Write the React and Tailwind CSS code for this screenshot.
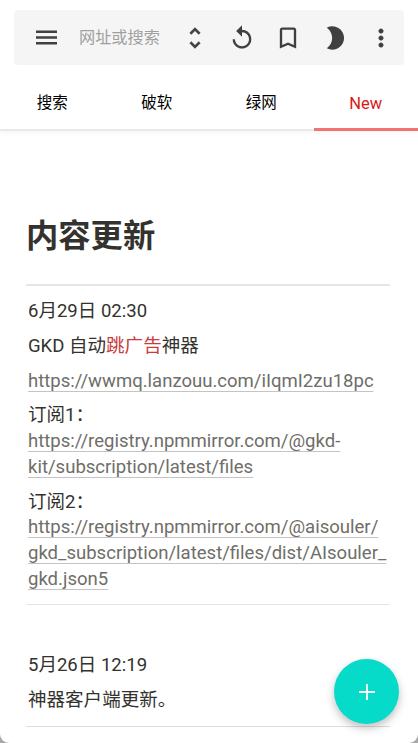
const tabs = ['搜索', '破软', '绿网', 'New']

const Link = ({ children }) => (
  <a className="text-[#6f6e69] underline decoration-[#c4c4c4] decoration-1 underline-offset-[4px] [text-decoration-skip-ink:none]">
    {children}
  </a>
)

const Toolbar = () => (
  <div className="mx-3.5 mt-2.5 flex h-[55px] items-center rounded bg-[#f5f5f5] text-[#404040]">
    <svg className="ml-[22px] h-[15px] w-[21px] shrink-0" viewBox="0 0 21 15" fill="currentColor">
      <path d="M0 .5h21v2.5H0zM0 6.3h21v2.5H0zM0 12.1h21v2.5H0z" />
    </svg>
    <span className="ml-[22px] w-[82px] shrink-0 whitespace-nowrap pt-px text-[16.2px] text-[#a0a0a0]">
      网址或搜索
    </span>
    <svg className="ml-5 h-7 w-7 shrink-0" viewBox="0 0 24 24" fill="currentColor" stroke="currentColor" strokeWidth=".3">
      <path d="M12 5.83 15.17 9l1.41-1.41L12 3 7.41 7.59 8.83 9 12 5.83zm0 12.34L8.83 15l-1.41 1.41L12 21l4.59-4.59L15.17 15 12 18.17z" />
    </svg>
    <svg className="ml-[19px] h-7 w-7 shrink-0" viewBox="0 0 24 24" fill="currentColor">
      <path d="M12 5V1L7 6l5 5V7c3.31 0 6 2.69 6 6s-2.69 6-6 6-6-2.69-6-6H4c0 4.42 3.58 8 8 8s8-3.58 8-8-3.58-8-8-8z" />
    </svg>
    <svg className="ml-[18px] h-7 w-7 shrink-0" viewBox="0 0 24 24" fill="currentColor">
      <path d="M17 3H7c-1.1 0-2 .9-2 2v16l7-3 7 3V5c0-1.1-.9-2-2-2zm0 15-5-2.18L7 18V5h10v13z" />
    </svg>
    <svg className="ml-[23.5px] h-6 w-[19px] shrink-0" viewBox="0 0 19 24" fill="currentColor">
      <path d="M.8 1.7A11.7 11.7 0 1 1 .8 22.3A12.6 12.6 0 0 0 .8 1.7z" />
    </svg>
    <svg className="ml-[22.5px] h-7 w-7 shrink-0" viewBox="0 0 24 24" fill="currentColor" stroke="currentColor" strokeWidth=".3">
      <path d="M12 8c1.1 0 2-.9 2-2s-.9-2-2-2-2 .9-2 2 .9 2 2 2zm0 2c-1.1 0-2 .9-2 2s.9 2 2 2 2-.9 2-2-.9-2-2-2zm0 6c-1.1 0-2 .9-2 2s.9 2 2 2 2-.9 2-2-.9-2-2-2z" />
    </svg>
  </div>
)

const Tabs = () => (
  <div className="flex h-[66px] border-b-2 border-[#e9e9e9] shadow-[0_2px_4px_rgba(0,0,0,0.04)]">
    {tabs.map((tab) => (
      <div
        key={tab}
        className={
          tab === 'New'
            ? '-mb-0.5 flex flex-1 items-center justify-center border-b-[3px] border-[#f07474] pt-[15px] text-[16.5px] text-[#dc1717]'
            : 'flex flex-1 items-center justify-center pt-[14px] text-[15.5px] text-black'
        }
      >
        {tab}
      </div>
    ))}
  </div>
)

export default function App() {
  return (
    <div className="h-[743px] overflow-hidden bg-[#a8a8a8] font-['Roboto','Noto_Sans_CJK_SC',sans-serif]">
      <div className="relative flex h-full flex-col rounded-b-[9px] bg-white">
        <Toolbar />
        <Tabs />
        <main className="px-[26px] text-[18.55px] leading-[25.7px] text-[#33322e]">
          <h1 className="mt-[81px] text-[32.3px] leading-[48px] font-bold">内容更新</h1>
          <section className="mt-[24px] flex h-[321px] w-[364px] flex-col gap-[9px] border-t-2 border-b border-[#e5e5e5] pt-[13.3px] pl-0.5">
            <p>6月29日 02:30</p>
            <p>
              GKD 自动<span className="text-[#c73c3c]">跳广告</span>神器
            </p>
            <p>
              <Link>https://wwmq.lanzouu.com/iIqmI2zu18pc</Link>
            </p>
            <p>
              订阅1：
              <br />
              <Link>
                https://registry.npmmirror.com/@gkd-
                <br />
                kit/subscription/latest/files
              </Link>
            </p>
            <p className="whitespace-nowrap">
              订阅2：
              <br />
              <Link>
                https://registry.npmmirror.com/@aisouler/
                <br />
                gkd_subscription/latest/files/dist/AIsouler_
                <br />
                gkd.json5
              </Link>
            </p>
          </section>
          <section className="flex h-[122px] w-[364px] flex-col gap-[9px] border-b border-[#dedede] pt-[48.3px] pl-0.5">
            <p>5月26日 12:19</p>
            <p>神器客户端更新。</p>
          </section>
        </main>
        <button className="absolute right-[19px] bottom-[19px] flex h-[65px] w-[65px] items-center justify-center rounded-full bg-[#05dbc8] shadow-[0_4px_8px_rgba(0,0,0,0.25)]">
          <svg className="h-4 w-4" viewBox="0 0 16 16" stroke="white" strokeWidth="1.8">
            <path d="M8 0v16M0 8h16" />
          </svg>
        </button>
      </div>
    </div>
  )
}
